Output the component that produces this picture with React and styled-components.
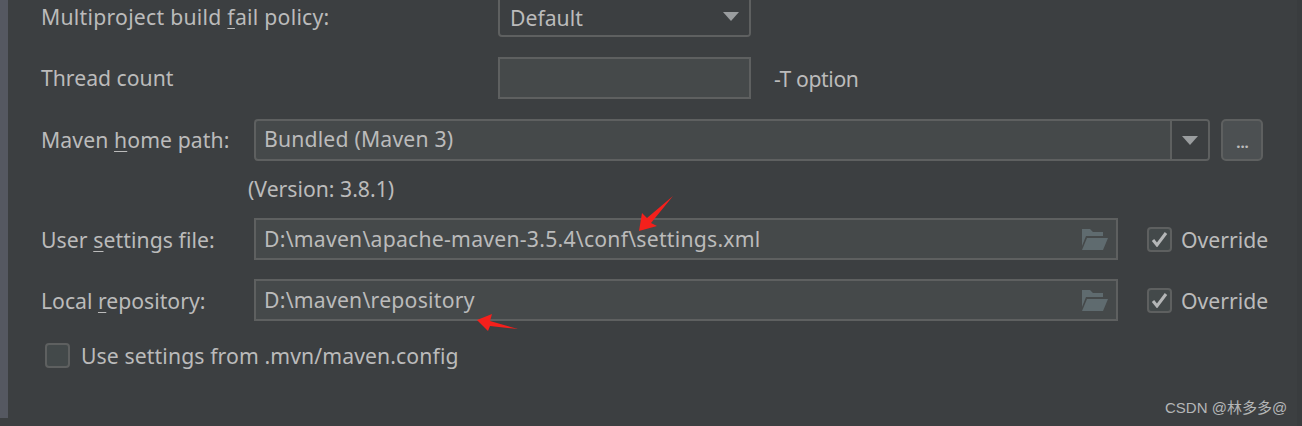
import React from 'react'
import styled, { createGlobalStyle } from 'styled-components'

const GlobalStyle = createGlobalStyle`
  html, body {
    margin: 0;
    padding: 0;
    background: #3c3f41;
  }
`;

const Page = styled.div`
  position: relative;
  display: flex;
  width: 1302px;
  height: 426px;
  overflow: hidden;
  background: #3c3f41;
  color: #bbbbbb;
  font-family: "Noto Sans", "Open Sans", sans-serif;
  font-size: 21.2px;
`;

const SideBar = styled.div`
  flex: none;
  width: 8px;
  height: 418px;
  background: #555861;
`;

const Form = styled.div`
  flex: 1;
  display: flex;
  flex-direction: column;
  margin-top: -5px;
  padding-left: 33px;
`;

const RightEdge = styled.div`
  flex: none;
  width: 5px;
  background: #393c3e;
`;

const Row = styled.div`
  display: flex;
  align-items: center;
  height: 42px;
  margin-bottom: ${p => p.$gap || 0}px;
`;

const Label = styled.label`
  flex: none;
  width: ${p => p.$width}px;
  margin-bottom: ${p => p.$lift || 0}px;
  letter-spacing: ${p => p.$tracking || 0}px;
  white-space: nowrap;
`;

const Mnemonic = styled.span`
  text-decoration: underline;
  text-underline-offset: 3px;
  text-decoration-thickness: 1px;
`;

const Combo = styled.div`
  box-sizing: border-box;
  display: flex;
  align-items: stretch;
  flex: ${p => (p.$width ? 'none' : 1)};
  width: ${p => (p.$width ? `${p.$width}px` : 'auto')};
  height: 42px;
  border: 2px solid #5e6060;
  border-radius: 4px;
  background: ${p => (p.$flat ? '#3c3f41' : '#45494a')};
  overflow: hidden;
`;

const ComboValue = styled.div`
  flex: 1;
  display: flex;
  align-items: center;
  padding-left: ${p => p.$inset}px;
  padding-bottom: ${p => p.$lift || 0}px;
  padding-top: ${p => p.$drop || 0}px;
  letter-spacing: ${p => p.$tracking || 0}px;
`;

const ComboArrow = styled.div`
  box-sizing: border-box;
  flex: none;
  width: ${p => p.$width}px;
  display: flex;
  align-items: center;
  justify-content: center;
  background: #3c3f41;
  border-left: ${p => (p.$divided ? '2px solid #5e6060' : 'none')};
`;

const Triangle = styled.div`
  width: 0;
  height: 0;
  border-left: 8px solid transparent;
  border-right: 8px solid transparent;
  border-top: 9px solid #9a9d9f;
`;

const TextField = styled.div`
  box-sizing: border-box;
  display: flex;
  align-items: center;
  justify-content: space-between;
  flex: none;
  width: ${p => p.$width}px;
  height: 42px;
  padding: 0 8px 0 8px;
  border: 2px solid #5e6060;
  background: #45494a;
  letter-spacing: 0.24px;
  white-space: nowrap;
`;

const FieldText = styled.span`
  margin-bottom: 2px;
`;

const Hint = styled.span`
  margin-left: 23px;
  letter-spacing: -0.4px;
`;

const BrowseButton = styled.button`
  box-sizing: border-box;
  flex: none;
  width: 42px;
  height: 42px;
  margin-left: 11px;
  padding: 0 0 0 1px;
  border: 2px solid #5e6060;
  border-radius: 5px;
  background: #4c5052;
  color: #bbbbbb;
  font-family: inherit;
  font-size: 15px;
  font-weight: 700;
  line-height: 42px;
`;

const RowEnd = styled.div`
  flex: none;
  width: 34px;
`;

const VersionNote = styled.div`
  height: 57px;
  line-height: 55px;
  padding-left: 207px;
`;

const CheckBox = styled.span`
  box-sizing: border-box;
  flex: none;
  display: flex;
  align-items: center;
  justify-content: center;
  width: 25px;
  height: 25px;
  border: 2px solid #5e6060;
  border-radius: 4px;
  background: #43494a;
`;

const CheckGroup = styled.div`
  display: flex;
  align-items: center;
  gap: ${p => p.$gap}px;
  margin-left: ${p => p.$left}px;
  letter-spacing: ${p => p.$tracking || 0}px;
`;

const Annotation = styled.svg`
  position: absolute;
  left: 0;
  top: 0;
  pointer-events: none;
`;

const Watermark = styled.div`
  position: absolute;
  left: 1165px;
  top: 398px;
  font-family: "Liberation Sans", "Noto Sans CJK SC", sans-serif;
  font-size: 15px;
  line-height: 20px;
  color: #b4b6b7;
  white-space: nowrap;
`;

const FolderIcon = () => (
  <svg width="26" height="21" viewBox="0 0 26 21">
    <path d="M0 0h8l3 3h10v4H4L0 17z" fill="#5f6b6f" />
    <path d="M5 9h21l-5 12H0z" fill="#5f6b6f" />
  </svg>
)

const CheckMark = () => (
  <svg width="17" height="15" viewBox="0 0 17 15">
    <path d="M2 8l4 5 9-12" fill="none" stroke="#b4b6b7" strokeWidth="3" />
  </svg>
)

const Override = () => (
  <CheckGroup $left={29} $gap={9}>
    <CheckBox><CheckMark /></CheckBox>
    Override
  </CheckGroup>
)

const App = () => (
  <Page>
    <GlobalStyle />
    <SideBar />
    <Form>
      <Row $gap={20}>
        <Label $width={457} $tracking={0.26}>Multiproject build <Mnemonic>f</Mnemonic>ail policy:</Label>
        <Combo $width={253} $flat>
          <ComboValue $inset={10} $drop={2}>Default</ComboValue>
          <ComboArrow $width={37}><Triangle /></ComboArrow>
        </Combo>
      </Row>
      <Row $gap={20}>
        <Label $width={457} $lift={2}>Thread count</Label>
        <TextField $width={253} />
        <Hint>-T option</Hint>
      </Row>
      <Row>
        <Label $width={213} $tracking={0.1} $lift={2}>Maven <Mnemonic>h</Mnemonic>ome path:</Label>
        <Combo>
          <ComboValue $inset={8} $lift={3} $tracking={0.18}>Bundled (Maven 3)</ComboValue>
          <ComboArrow $width={38} $divided><Triangle /></ComboArrow>
        </Combo>
        <BrowseButton>...</BrowseButton>
        <RowEnd />
      </Row>
      <VersionNote>(Version: 3.8.1)</VersionNote>
      <Row $gap={19}>
        <Label $width={213} $tracking={0.08}>User <Mnemonic>s</Mnemonic>ettings file:</Label>
        <TextField $width={864}>
          <FieldText>D:\maven\apache-maven-3.5.4\conf\settings.xml</FieldText>
          <FolderIcon />
        </TextField>
        <Override />
      </Row>
      <Row $gap={13}>
        <Label $width={213}>Local <Mnemonic>r</Mnemonic>epository:</Label>
        <TextField $width={864}>
          <FieldText>D:\maven\repository</FieldText>
          <FolderIcon />
        </TextField>
        <Override />
      </Row>
      <Row>
        <CheckGroup $left={4} $gap={11} $tracking={0.11}>
          <CheckBox />
          Use settings from .mvn/maven.config
        </CheckGroup>
      </Row>
    </Form>
    <RightEdge />
    <Annotation width="1302" height="426">
      <polygon points="639,231 642,213 647,218 673,196 651,223 657,226" fill="#f5201c" />
      <polygon points="477,320 492,314 490,321 518,329 490,326 488,331" fill="#f5201c" />
    </Annotation>
    <Watermark>CSDN @林多多@</Watermark>
  </Page>
)

export default App
